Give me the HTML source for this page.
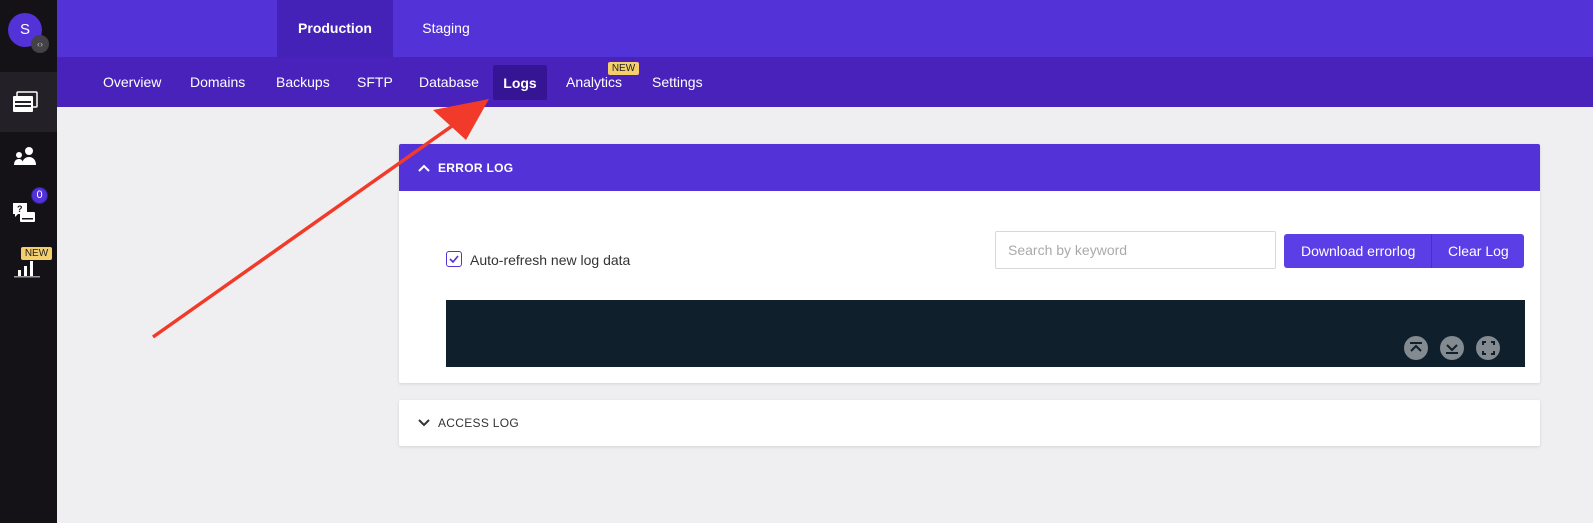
<!DOCTYPE html>
<html><head><meta charset="utf-8"><style>
*{box-sizing:border-box;margin:0;padding:0}
body{width:1593px;height:523px;overflow:hidden;background:#efeff1;font-family:"Liberation Sans",sans-serif;position:relative}
.side{position:absolute;left:0;top:0;width:57px;height:523px;background:#151217}
.top{position:absolute;left:57px;top:0;right:0;height:57px;background:#5333d8}
.sub{position:absolute;left:57px;top:57px;right:0;height:50px;background:#4822bb}
.tab{position:absolute;top:0;height:57px;line-height:56px;color:#fff;font-size:14px;text-align:center}
.nav{position:absolute;top:0;height:50px;line-height:51px;color:#fff;font-size:14px}
.card{position:absolute;left:399px;width:1141px;background:#fff;box-shadow:0 1px 3px rgba(0,0,0,.12);border-radius:2px}
</style></head><body>
<div class="side">
 <div style="position:absolute;left:8px;top:13px;width:34px;height:34px;border-radius:50%;background:#5333d8;color:#fff;font-size:15px;text-align:center;line-height:34px">S</div>
 <div style="position:absolute;left:31px;top:35px;width:18px;height:18px;border-radius:50%;background:#444247;color:#bbb;font-size:9px;text-align:center;line-height:18px">‹›</div>
 <div style="position:absolute;left:0;top:72px;width:57px;height:60px;background:#232127"></div>
 <svg style="position:absolute;left:12px;top:91px" width="26" height="22" viewBox="0 0 26 22" fill="#fff"><rect x="5" y="1" width="20" height="15" rx="1" fill="none" stroke="#fff" stroke-width="1.5"/><rect x="1" y="5" width="20" height="16" rx="1"/><rect x="3" y="10" width="16" height="2" fill="#232127"/><rect x="3" y="14" width="16" height="2" fill="#232127"/></svg>
 <svg style="position:absolute;left:13px;top:146px" width="24" height="20" viewBox="0 0 24 20" fill="#fff"><circle cx="16" cy="5" r="4"/><path d="M9 19c0-5 3-8 7-8s7 3 7 8z"/><circle cx="6" cy="9" r="3"/><path d="M1 19c0-4 2-6 5-6s4 2 4 6z"/></svg>
 <svg style="position:absolute;left:12px;top:202px" width="24" height="22" viewBox="0 0 24 22" fill="#fff"><rect x="1" y="1" width="14" height="11"/><path d="M3 12l0 3 3-3z"/><rect x="8" y="10" width="15" height="10" rx="1"/><text x="5" y="10" font-size="9" font-weight="bold" fill="#151217" font-family="Liberation Sans">?</text><rect x="10" y="16" width="11" height="1.5" fill="#151217"/></svg>
 <div style="position:absolute;left:31px;top:187px;width:17px;height:17px;border-radius:50%;background:#5333d8;border:1px solid #2a2090;color:#fff;font-size:11px;text-align:center;line-height:15px">0</div>
 <div style="position:absolute;left:21px;top:247px;width:31px;height:13px;background:#f5cf6b;color:#222;font-size:10px;text-align:center;line-height:13px;border-radius:2px">NEW</div>
 <svg style="position:absolute;left:14px;top:258px" width="26" height="20" viewBox="0 0 26 20" fill="#fff"><rect x="4" y="12" width="3" height="6"/><rect x="10" y="8" width="3" height="10"/><rect x="16" y="3" width="3" height="15"/><rect x="0" y="18" width="26" height="1.5" fill="#999"/></svg>
</div>
<div class="top">
 <div class="tab" style="left:220px;width:116px;background:#4422b8;font-weight:bold">Production</div>
 <div class="tab" style="left:336px;width:106px">Staging</div>
</div>
<div class="sub">
 <div class="nav" style="left:46px">Overview</div>
 <div class="nav" style="left:133px">Domains</div>
 <div class="nav" style="left:219px">Backups</div>
 <div class="nav" style="left:300px">SFTP</div>
 <div class="nav" style="left:362px">Database</div>
 <div style="position:absolute;left:436px;top:8px;width:54px;height:35px;background:#351593;border-radius:2px;color:#fff;font-weight:bold;font-size:14px;text-align:center;line-height:36px">Logs</div>
 <div class="nav" style="left:509px">Analytics</div>
 <div style="position:absolute;left:551px;top:5px;width:31px;height:13px;background:#f5cf6b;color:#222;font-size:10px;text-align:center;line-height:13px;border-radius:2px">NEW</div>
 <div class="nav" style="left:595px">Settings</div>
</div>
<div class="card" style="top:144px;height:239px">
 <div style="height:47px;background:#5333d8;color:#fff;font-weight:bold;font-size:12px;line-height:48px;padding-left:39px;letter-spacing:.3px;border-radius:2px 2px 0 0">ERROR LOG</div>
 <svg style="position:absolute;left:19px;top:20px" width="12" height="8" viewBox="0 0 12 8"><path d="M1 7l5-5 5 5" stroke="#fff" stroke-width="2" fill="none"/></svg>
 <div style="position:absolute;left:47px;top:107px;width:16px;height:16px;border:1.5px solid #5333d8;border-radius:3px"></div>
 <svg style="position:absolute;left:50px;top:111px" width="10" height="8" viewBox="0 0 10 8"><path d="M1 4l3 3 5-6" stroke="#5333d8" stroke-width="1.6" fill="none"/></svg>
 <div style="position:absolute;left:71px;top:108px;font-size:14px;color:#333">Auto-refresh new log data</div>
 <div style="position:absolute;left:596px;top:87px;width:281px;height:38px;border:1px solid #d8d8dc;border-radius:2px;font-size:14px;color:#aaa;line-height:36px;padding-left:12px">Search by keyword</div>
 <div style="position:absolute;left:885px;top:90px;width:240px;height:34px;background:#5b3ee6;border-radius:3px;color:#fff;font-size:14px;line-height:34px">
  <span style="position:absolute;left:17px">Download errorlog</span>
  <span style="position:absolute;left:147px;top:0;width:1px;height:34px;background:#4a2ec8"></span>
  <span style="position:absolute;left:164px">Clear Log</span>
 </div>
 <div style="position:absolute;left:47px;top:156px;width:1079px;height:67px;background:#0f1f2c">
  <div style="position:absolute;left:958px;top:36px;width:24px;height:24px;border-radius:50%;background:#838a90"></div>
  <div style="position:absolute;left:994px;top:36px;width:24px;height:24px;border-radius:50%;background:#838a90"></div>
  <div style="position:absolute;left:1030px;top:36px;width:24px;height:24px;border-radius:50%;background:#838a90"></div>
  <svg style="position:absolute;left:958px;top:36px" width="96" height="24" viewBox="0 0 96 24" stroke="#0f1f2c" stroke-width="2" fill="none"><path d="M6 7h12M7 15l5-5 5 5"/><path d="M42 17h12M43 9l5 5 5-5"/><path d="M79 9V6h3M87 6h3v3M90 15v3h-3M82 18h-3v-3"/></svg>
 </div>
</div>
<div class="card" style="top:400px;height:46px">
 <div style="font-size:12px;color:#333;line-height:47px;padding-left:39px;letter-spacing:.3px">ACCESS LOG</div>
 <svg style="position:absolute;left:19px;top:19px" width="12" height="8" viewBox="0 0 12 8"><path d="M1 1l5 5 5-5" stroke="#333" stroke-width="2" fill="none"/></svg>
</div>
<svg style="position:absolute;left:0;top:0" width="1593" height="523"><path d="M153 337L452 126" stroke="#f23a2a" stroke-width="3.5"/><path d="M489 99L433 110L466 140Z" fill="#f23a2a"/></svg>
</body></html>
